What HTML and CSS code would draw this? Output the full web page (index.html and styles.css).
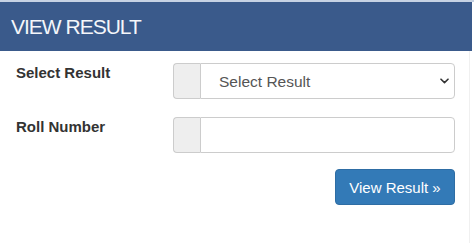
FILE: index.html
```html
<!DOCTYPE html>
<html lang="en">
<head>
<meta charset="utf-8">
<title>View Result</title>
<link rel="stylesheet" href="styles.css">
</head>
<body>
<div class="panel">
  <div class="panel-head">VIEW RESULT</div>
  <form class="panel-body">
    <div class="row">
      <label class="label" for="result">Select Result</label>
      <div class="group">
        <span class="addon"></span>
        <div class="select-wrap">
          <select id="result" class="control select">
            <option>Select Result</option>
          </select>
          <svg class="chevron" width="9" height="6" viewBox="0 0 9 6" aria-hidden="true"><path d="M1 1.2 L4.5 4.6 L8 1.2" fill="none" stroke="#333" stroke-width="1.6" stroke-linecap="round" stroke-linejoin="round"/></svg>
        </div>
      </div>
    </div>
    <div class="row">
      <label class="label" for="roll">Roll Number</label>
      <div class="group">
        <span class="addon"></span>
        <input id="roll" class="control" type="text">
      </div>
    </div>
    <div class="actions">
      <button type="button" class="btn">View Result &raquo;</button>
    </div>
  </form>
</div>
</body>
</html>
```
FILE: styles.css
```css
html, body {
  margin: 0;
  padding: 0;
  background: #ffffff;
}
body {
  border-top: 2px solid #c6d2e3;
  font-family: "Liberation Sans", Arial, sans-serif;
  color: #333333;
}
.panel {
  width: 472px;
}
.panel-head {
  background: #3a5a8b;
  color: #f4f6fa;
  height: 49px;
  box-sizing: border-box;
  padding-left: 11px;
  font-size: 21px;
  letter-spacing: -1px;
  line-height: 49px;
}
.panel-body {
  margin: 0 2px 0 0;
  border-right: 1px solid #f0f0f0;
  padding: 12px 14px 38px 16px;
  display: flex;
  flex-direction: column;
  gap: 18px;
}
.row {
  display: flex;
  align-items: flex-start;
}
.label {
  width: 157px;
  flex: none;
  font-size: 15px;
  font-weight: bold;
  line-height: 20px;
  color: #333333;
}
.group {
  display: flex;
  width: 282px;
  flex: none;
  height: 36px;
}
.addon {
  width: 26px;
  background: #eeeeee;
  border: 1px solid #cccccc;
  border-right: none;
  border-radius: 4px 0 0 4px;
  flex: none;
}
.select-wrap {
  position: relative;
  flex: 1;
  display: flex;
}
.control {
  flex: 1;
  min-width: 0;
  box-sizing: border-box;
  height: 36px;
  margin: 0;
  border: 1px solid #cccccc;
  border-radius: 0 4px 4px 0;
  background: #ffffff;
  font-family: "Liberation Sans", Arial, sans-serif;
  font-size: 15.5px;
  color: #555555;
  padding: 0 12px;
  outline: none;
}
.select {
  appearance: none;
  -webkit-appearance: none;
  padding-left: 18px;
}
.chevron {
  position: absolute;
  right: 6px;
  top: 15px;
  pointer-events: none;
}
.actions {
  display: flex;
  justify-content: flex-end;
  margin-top: -2px;
}
.btn {
  width: 120px;
  height: 36px;
  background: #337ab7;
  border: 1px solid #2e6da4;
  border-radius: 4px;
  color: #ffffff;
  font-family: "Liberation Sans", Arial, sans-serif;
  font-size: 15px;
  padding: 0;
  cursor: pointer;
}
```
